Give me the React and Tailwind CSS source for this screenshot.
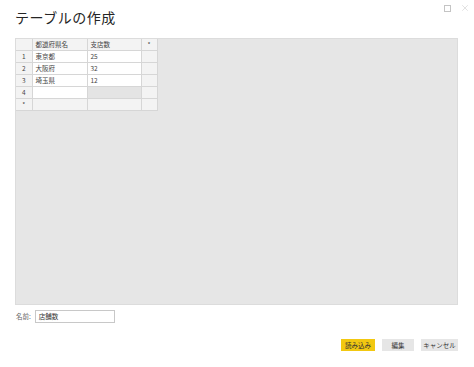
import { X } from 'lucide-react';

const rows = [
  { n: '1', pref: '東京都', count: '25' },
  { n: '2', pref: '大阪府', count: '32' },
  { n: '3', pref: '埼玉県', count: '12' },
];

const cell = 'border-r border-b border-[#d6d6d6] px-[3px] h-[11px] leading-[11px]';

const App = () => {
  return (
    <div
      className="w-[474px] h-[367px] bg-white relative overflow-hidden text-[#333]"
      style={{ fontFamily: '"Noto Sans CJK JP", "Liberation Sans", sans-serif' }}
    >
      {/* Window controls */}
      <div className="absolute top-[3px] right-[4px] flex items-center gap-[9px] text-[#c4c4c4]">
        <div className="w-[7px] h-[7px] border border-[#c4c4c4]" />
        <X size={10} strokeWidth={1.2} />
      </div>

      <div className="flex flex-col px-[15px] pt-[7px]">
        <h1 className="text-[14px] leading-[20px] font-normal text-[#252525] tracking-[0.5px]">テーブルの作成</h1>

        {/* Grid panel */}
        <div className="mt-[11px] mr-[1px] h-[267px] bg-[#e6e6e6] border border-[#dcdcdc]">
          <table className="border-collapse text-[6.5px] text-[#444]">
            <thead>
              <tr className="bg-[#f3f3f3]">
                <th className={`${cell} w-[16px] font-normal`} />
                <th className={`${cell} w-[55px] text-left font-normal`}>都道府県名</th>
                <th className={`${cell} w-[54px] text-left font-normal`}>支店数</th>
                <th className={`${cell} w-[16px] font-normal text-center`}>*</th>
              </tr>
            </thead>
            <tbody>
              {rows.map((r) => (
                <tr key={r.n}>
                  <td className={`${cell} bg-[#f3f3f3] text-center`}>{r.n}</td>
                  <td className={`${cell} bg-white`}>{r.pref}</td>
                  <td className={`${cell} bg-white`}>{r.count}</td>
                  <td className={`${cell} bg-[#f3f3f3]`} />
                </tr>
              ))}
              <tr>
                <td className={`${cell} bg-[#f3f3f3] text-center`}>4</td>
                <td className={`${cell} bg-white`} />
                <td className={`${cell} bg-[#e4e4e4]`} />
                <td className={`${cell} bg-[#f3f3f3]`} />
              </tr>
              <tr>
                <td className={`${cell} bg-[#f3f3f3] text-center`}>*</td>
                <td className={`${cell} bg-[#f3f3f3]`} />
                <td className={`${cell} bg-[#f3f3f3]`} />
                <td className={`${cell} bg-[#f3f3f3]`} />
              </tr>
            </tbody>
          </table>
        </div>

        {/* Name */}
        <div className="mt-[5px] flex items-center gap-[4px] text-[6.5px]">
          <span className="text-[#666] pl-[1px]">名前:</span>
          <div className="w-[80px] h-[13px] border border-[#c8c8c8] bg-white px-[3px] leading-[11px] text-[#333]">
            店舗数
          </div>
        </div>

        {/* Buttons */}
        <div className="mt-[16px] flex justify-end gap-[7px] pr-[1px] text-[6.5px]">
          <button className="w-[34px] h-[12px] bg-[#f2c811] text-[#333] leading-[12px]">読み込み</button>
          <button className="w-[32px] h-[12px] bg-[#e6e6e6] text-[#333] leading-[12px]">編集</button>
          <button className="w-[37px] h-[12px] bg-[#e6e6e6] text-[#333] leading-[12px]">キャンセル</button>
        </div>
      </div>
    </div>
  );
};

export default App;
